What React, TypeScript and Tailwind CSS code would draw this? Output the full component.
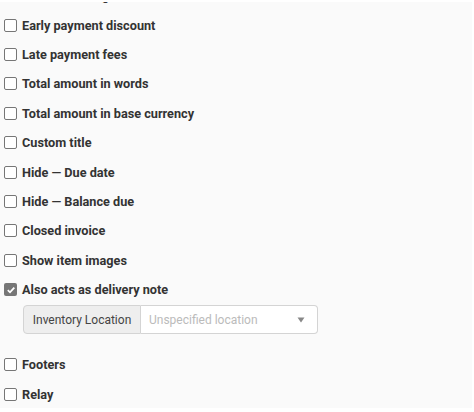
import React from "react";

const items1 = [
  "Footnote string",
  "Early payment discount",
  "Late payment fees",
  "Total amount in words",
  "Total amount in base currency",
  "Custom title",
  "Hide — Due date",
  "Hide — Balance due",
  "Closed invoice",
  "Show item images",
];

function Box({ checked }: { checked?: boolean }) {
  if (checked) {
    return (
      <span className="flex h-[13px] w-[13px] shrink-0 items-center justify-center rounded-[2px] bg-[#767676]">
        <svg width="10" height="10" viewBox="0 0 10 10">
          <path d="M1.8 5.2 L4 7.3 L8.3 2.6" fill="none" stroke="white" strokeWidth="1.8" />
        </svg>
      </span>
    );
  }
  return <span className="h-[13px] w-[13px] shrink-0 rounded-[2px] border border-[#767676] bg-white" />;
}

function Row({ label, checked }: { label: string; checked?: boolean }) {
  return (
    <div className="flex h-[29.4px] items-center gap-[5px] pl-[4px]">
      <Box checked={checked} />
      <span className="text-[12.7px] font-bold text-[#333]">{label}</span>
    </div>
  );
}

export default function App() {
  return (
    <div className="h-[412px] w-[474px] overflow-hidden bg-white" style={{ fontFamily: 'Roboto, "Liberation Sans", Arial, sans-serif' }}>
      <div className="mt-[2px] h-[406px] w-[472px] overflow-hidden bg-[#fafafa]">
        <div className="-mt-[21px]">
          {items1.map((l) => (
            <Row key={l} label={l} />
          ))}
          <Row label="Also acts as delivery note" checked />
          <div className="ml-[23px] mt-[1px] flex h-[29px] w-[295px] text-[12px]">
            <div className="flex w-[118px] items-center justify-center rounded-l-[4px] border border-[#d4d4d4] bg-[#eeeeee] text-[#444]">
              Inventory Location
            </div>
            <div className="flex flex-1 items-center justify-between rounded-r-[4px] border border-l-0 border-[#d4d4d4] bg-white pl-[8px] pr-[12px] text-[#bbb]">
              <span>Unspecified location</span>
              <svg width="8" height="6" viewBox="0 0 8 6">
                <path d="M0.5 0.5 L7.5 0.5 L4 5.5 Z" fill="#888" />
              </svg>
            </div>
          </div>
          <div className="h-[16px]" />
          <Row label="Footers" />
          <Row label="Relay" />
        </div>
      </div>
    </div>
  );
}
